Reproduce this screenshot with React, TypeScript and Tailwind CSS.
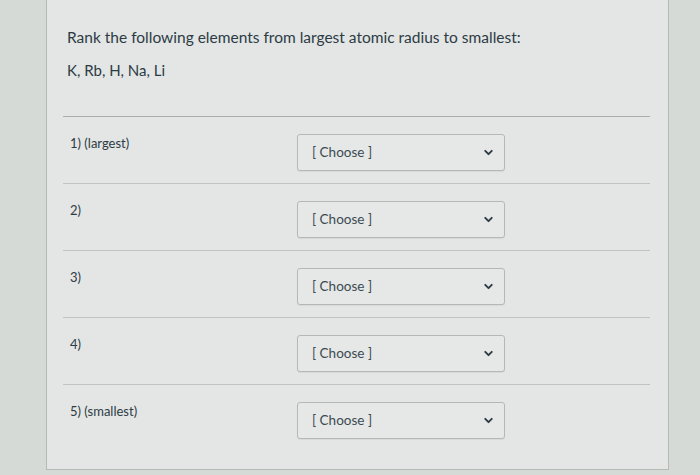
import React from 'react';
import { ChevronDown } from 'lucide-react';

const rows = ['1) (largest)', '2)', '3)', '4)', '5) (smallest)'];

const ChooseSelect: React.FC = () => (
  <div className="w-[208px] h-[37px] flex items-center justify-between pl-[14px] pr-[9px] bg-[#e5e8e6] border border-[#b4b9b7] rounded-[3px] shadow-[0_1px_1px_rgba(0,0,0,0.06)]">
    <span className="text-[13.5px] text-[#3c4a52]">[ Choose ]</span>
    <ChevronDown size={13} strokeWidth={3.5} className="text-[#2d3b45]" />
  </div>
);

export default function App() {
  return (
    <div className="w-[700px] h-[475px] bg-[#d6dad7] overflow-hidden font-['Lato','Liberation_Sans',sans-serif] text-[#2d3b45]">
      <div className="ml-[46px] w-[623px] h-[470px] bg-[#e3e6e4] border-x border-b border-[#b5bab8]">
        <div className="pt-[25px] pl-[20px]">
          <p className="text-[15.5px] leading-[24px]">Rank the following elements from largest atomic radius to smallest:</p>
          <p className="mt-[9px] text-[15px] leading-[24px]">K, Rb, H, Na, Li</p>
        </div>

        <div className="mt-[34px] ml-[16px] mr-[18px]">
          {rows.map((label, i) => (
            <div
              key={label}
              className={`flex items-start border-t ${i === 0 ? 'border-[#a9aeac]' : 'border-[#c0c5c3]'} h-[67px] pt-[16px]`}
            >
              <span className="w-[234px] pl-[7px] text-[13px] leading-[20px]">{label}</span>
              <div className="mt-[1px]">
                <ChooseSelect />
              </div>
            </div>
          ))}
        </div>
      </div>
    </div>
  );
}
